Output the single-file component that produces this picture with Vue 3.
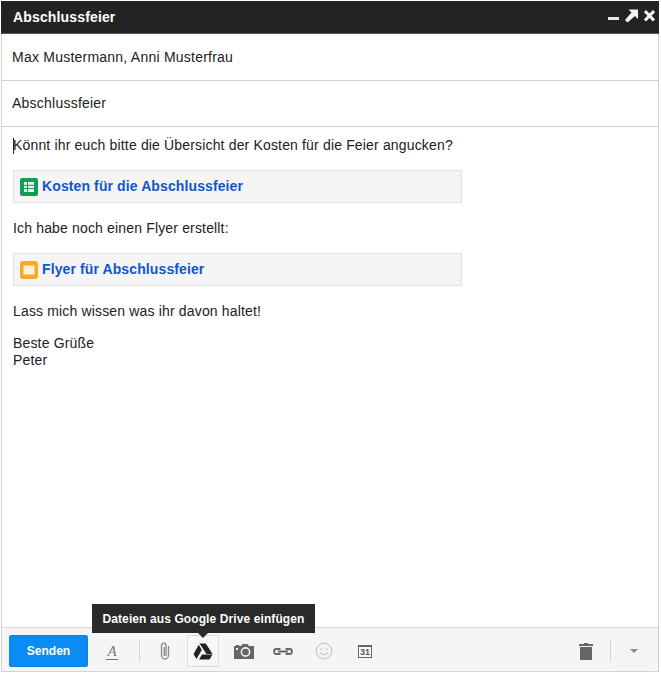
<script setup>
const tools = ['format', 'clip', 'drive', 'photo', 'link', 'smile', 'cal']
</script>

<template>
  <div class="win">
    <header class="head">
      <span class="title">Abschlussfeier</span>
      <span class="controls">
        <svg width="11" height="14" viewBox="0 0 11 14"><rect x="0" y="8" width="11" height="3" fill="#e8e8e8" /></svg>
        <svg width="13" height="14" viewBox="0 0 13 14"><path d="M3.500 0.500H13V10L10 7L2.500 13.500L0 11L6.500 3.500z" fill="#f2f2f2" /></svg>
        <svg width="11" height="14" viewBox="0 0 11 14"><path d="M1 2L10 11.500M10 2L1 11.500" stroke="#f2f2f2" stroke-width="3" /></svg>
      </span>
    </header>
    <div class="frame">
      <div class="row row-to">Max Mustermann, Anni Musterfrau</div>
      <div class="row row-subject">Abschlussfeier</div>
      <main class="body">
        <p class="first"><span class="caret"></span>Könnt ihr euch bitte die Übersicht der Kosten für die Feier angucken?</p>
        <div class="chip">
          <svg width="18" height="18" viewBox="0 0 18 18">
            <rect width="18" height="18" rx="2" fill="#0f9d58" />
            <rect x="4" y="4" width="10" height="10" fill="#e8f5ee" />
            <path d="M4 7.300H14M4 10.600H14M7.500 4V14" stroke="#0f9d58" stroke-width="1" />
          </svg>
          <span>Kosten für die Abschlussfeier</span>
        </div>
        <p>Ich habe noch einen Flyer erstellt:</p>
        <div class="chip">
          <svg width="18" height="18" viewBox="0 0 18 18">
            <rect width="18" height="18" rx="3" fill="#f9a825" />
            <rect x="3.500" y="4.500" width="11" height="9" fill="#fdf3dc" />
          </svg>
          <span>Flyer für Abschlussfeier</span>
        </div>
        <p class="closing">Lass mich wissen was ihr davon haltet!</p>
        <p>Beste Grüße<br />Peter</p>
      </main>
      <footer class="bar">
        <button class="send">Senden</button>
        <div class="tools">
          <template v-for="t in tools" :key="t">
            <span :class="['tool', 'tool-' + t]">
              <template v-if="t === 'format'">
                <span class="fmt">A</span>
              </template>
              <svg v-else-if="t === 'clip'" width="12" height="18" viewBox="0 0 12 18">
                <path d="M9.500 4V13A3.500 4 0 0 1 2.500 13V4A2.200 2.800 0 0 1 7 4V12.500A.9 1 0 0 1 5.200 12.500V5" fill="none" stroke="#888" stroke-width="1.300" />
              </svg>
              <svg v-else-if="t === 'drive'" width="20" height="17" viewBox="0 0 20 17">
                <path d="M6.500 0.500H12.800L19.500 11H13.500zM5.800 1.700L8.800 7L3.500 16L0.500 11zM9 11.500H19.500L16.500 16.500H6z" fill="#222" />
              </svg>
              <svg v-else-if="t === 'photo'" width="20" height="15" viewBox="0 0 20 15">
                <path d="M0 2H2V1H5V2H7L8.500 0H13.500L15 2H20V15H0z" fill="#666" />
                <circle cx="11.500" cy="8" r="4.100" fill="none" stroke="#eee" stroke-width="1.600" />
                <rect x="2" y="4" width="2" height="2" fill="#eee" />
              </svg>
              <svg v-else-if="t === 'link'" width="20" height="7" viewBox="0 0 20 7">
                <path d="M7.500 1H3.500A2.500 2.500 0 0 0 3.500 6H7.500M12.500 1H16.500A2.500 2.500 0 0 1 16.500 6H12.500M5 3.500H15" fill="none" stroke="#666" stroke-width="1.800" />
              </svg>
              <svg v-else-if="t === 'smile'" width="18" height="18" viewBox="0 0 18 18">
                <circle cx="9" cy="9" r="7.800" fill="none" stroke="#d0d0d0" stroke-width="1.400" />
                <circle cx="6.300" cy="7" r="1" fill="#ccc" />
                <circle cx="11.700" cy="7" r="1" fill="#ccc" />
                <path d="M5 10.500Q9 15 13 10.500" fill="none" stroke="#ccc" stroke-width="1.300" />
              </svg>
              <span v-else class="cal">31</span>
            </span>
            <span v-if="t === 'format'" class="sep"></span>
          </template>
        </div>
        <div class="right">
          <svg width="14" height="17" viewBox="0 0 14 17">
            <path d="M5 0H9V1H14V3H0V1H5zM1 4H13V17H1z" fill="#666" />
          </svg>
          <span class="sep"></span>
          <span class="more"><span class="tri"></span></span>
        </div>
        <div class="tip">Dateien aus Google Drive einfügen</div>
      </footer>
    </div>
  </div>
</template>

<style>
html, body { margin: 0; background: #fff; }
</style>

<style scoped>
.win {
  width: 658px;
  height: 671px;
  margin: 1px 0 0 1px;
  display: flex;
  flex-direction: column;
  font-family: "Liberation Sans", Arial, sans-serif;
  color: #222;
}
.head {
  height: 33px;
  flex: none;
  box-sizing: border-box;
  background: #232323;
  border-bottom: 1px solid #555;
  display: flex;
  align-items: center;
  justify-content: space-between;
  padding: 0 4px 0 12px;
}
.title {
  color: #fff;
  font-size: 14px;
  font-weight: bold;
  letter-spacing: 0.15px;
}
.controls {
  display: flex;
  align-items: center;
  gap: 6px;
  margin-top: -2px;
}
.frame {
  flex: 1;
  min-height: 0;
  display: flex;
  flex-direction: column;
  border: 1px solid #d4d4d4;
  border-top: 0;
}
.row {
  height: 46px;
  flex: none;
  box-sizing: border-box;
  border-bottom: 1px solid #cfcfcf;
  display: flex;
  align-items: center;
  padding: 0 10px;
  font-size: 14px;
  letter-spacing: 0.23px;
}
.row-to { height: 47px; }
.row-subject { padding-bottom: 2px; }
.body {
  flex: 1;
  padding: 10px 11px 0;
  font-size: 14px;
  line-height: 17px;
  letter-spacing: 0.16px;
}
.body p {
  margin: 0 0 16px;
}
.body .closing { margin-bottom: 15px; }
.body .first { position: relative; }
.caret {
  position: absolute;
  left: 0;
  top: 1px;
  width: 1px;
  height: 16px;
  background: #222;
}
.chip {
  width: 449px;
  height: 33px;
  box-sizing: border-box;
  background: #f5f5f5;
  border: 1px solid #e0e0e0;
  display: flex;
  align-items: center;
  gap: 4px;
  padding: 0 6px;
  margin-bottom: 17px;
  color: #15c;
  font-weight: bold;
  letter-spacing: 0.11px;
}
.bar {
  position: relative;
  height: 44px;
  flex: none;
  box-sizing: border-box;
  background: #f5f5f5;
  border-top: 1px solid #d8d8d8;
  display: flex;
  align-items: center;
  padding: 3px 6px 0 7px;
}
.send {
  width: 79px;
  height: 32px;
  border: 1px solid #0a84e8;
  border-radius: 2px;
  background: #0b8cf5;
  color: #fff;
  font: bold 12px "Liberation Sans", Arial, sans-serif;
  padding: 0;
}
.tools {
  display: flex;
  align-items: center;
  margin-left: 8px;
}
.tool {
  width: 32px;
  height: 32px;
  box-sizing: border-box;
  display: flex;
  align-items: center;
  justify-content: center;
  margin-right: 8px;
}
.tool-format { margin-right: 11px; }
.tool-clip { margin-right: 6px; }
.tool-drive {
  border: 1px solid #ddd;
  background: #f7f7f7;
  margin-right: 9px;
}
.tool-photo { margin-right: 7px; }
.tool-link { margin-right: 9px; }
.tool-smile { margin-right: 9px; }
.fmt {
  font: italic 15px "Liberation Serif", serif;
  color: #777;
  border-bottom: 1px solid #777;
  padding: 0 1px;
  line-height: 16px;
}
.sep {
  width: 1px;
  height: 22px;
  background: #d5d5d5;
  margin-right: 9px;
}
.cal {
  width: 14px;
  height: 13px;
  box-sizing: border-box;
  border: 1px solid #666;
  border-top-width: 2px;
  background: #fafafa;
  font: bold 9px/10px "Liberation Sans", Arial, sans-serif;
  text-align: center;
  color: #555;
}
.right {
  margin-left: auto;
  display: flex;
  align-items: center;
}
.right svg { margin-right: 17px; }
.right .sep { margin-right: 4px; }
.more {
  width: 37px;
  height: 32px;
  display: flex;
  align-items: center;
  justify-content: center;
  background: #f3f3f3;
}
.tri {
  width: 0;
  height: 0;
  border: 4px solid transparent;
  border-top: 4px solid #888;
  border-bottom: 0;
}
.tip {
  position: absolute;
  left: 90px;
  top: -24px;
  width: 223px;
  height: 29px;
  background: #2a2a2a;
  color: #fff;
  font-size: 12px;
  font-weight: bold;
  letter-spacing: 0.1px;
  display: flex;
  align-items: center;
  justify-content: center;
}
.tip::after {
  content: "";
  position: absolute;
  left: 106px;
  top: 29px;
  border: 5px solid transparent;
  border-top: 5px solid #2a2a2a;
  border-bottom: 0;
}
</style>
